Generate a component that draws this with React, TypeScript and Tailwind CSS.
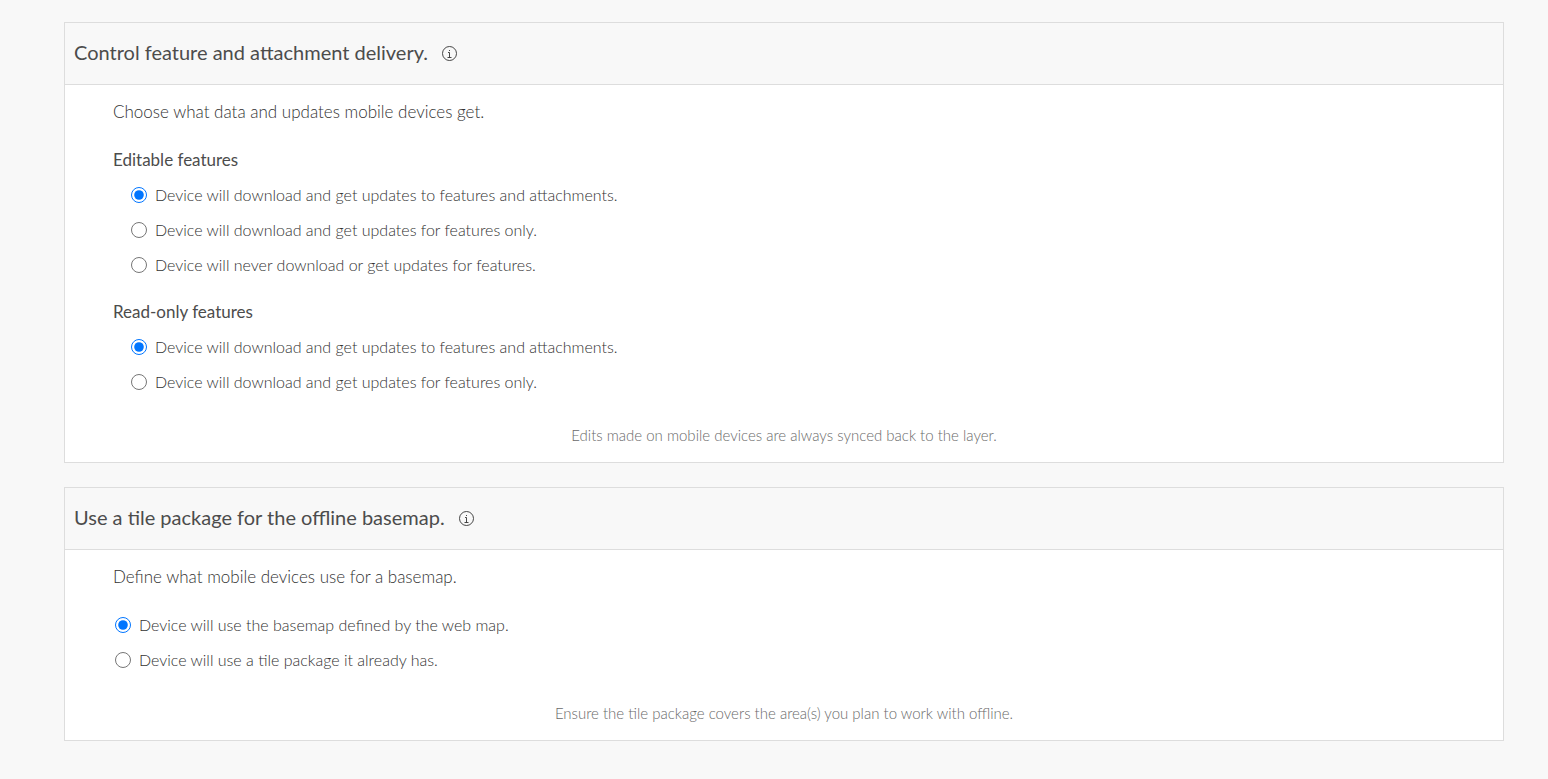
import type { ReactNode } from 'react';
import { clsx } from 'clsx';

interface PanelProps {
  title: string;
  intro: string;
  note: string;
  children: ReactNode;
}

interface RadioGroupProps {
  name: string;
  label: string;
  showLabel?: boolean;
  options: string[];
}

function InfoIcon() {
  return (
    <svg width="16" height="16" viewBox="0 0 16 16" fill="none" stroke="currentColor" aria-hidden="true">
      <circle cx="7.5" cy="7.5" r="7" strokeWidth="0.9" />
      <path d="M7 4.5h1M6 6.5h1.5v5M5.5 11.5h4" strokeWidth="0.9" />
    </svg>
  );
}

function RadioGroup({ name, label, showLabel = true, options }: RadioGroupProps) {
  return (
    <fieldset aria-label={label}>
      {showLabel && <legend className="mb-[11px] text-[17px] leading-6 text-[#4c4c4c]">{label}</legend>}
      <div className={clsx('flex flex-col gap-[11px]', showLabel ? 'pl-[18px]' : 'pl-[2px]')}>
        {options.map((option, index) => (
          <label key={option} className="flex items-center gap-2 text-base leading-6 font-light text-[#323232]">
            <input type="radio" name={name} defaultChecked={index === 0} className="size-4 accent-[#0075ff]" />
            {option}
          </label>
        ))}
      </div>
    </fieldset>
  );
}

function Panel({ title, intro, note, children }: PanelProps) {
  return (
    <section className="border border-[#dddddd] bg-white">
      <header className="flex items-center gap-[14px] border-b border-[#dddddd] bg-[#f8f8f8] px-[9px] py-[17px]">
        <h2 className="pb-[3px] text-xl leading-6 text-[#4c4c4c]">{title}</h2>
        <button type="button" aria-label="More information" className="text-[#323232]">
          <InfoIcon />
        </button>
      </header>
      <div className="px-12 pt-[15px] pb-[17px]">
        <p className="mb-6 text-[17px] leading-6 font-light text-[#323232]">{intro}</p>
        <div className="flex flex-col gap-[23px]">{children}</div>
        <p className="mt-[31px] text-center text-[15px] leading-5 font-light text-[#6a6a6a]">{note}</p>
      </div>
    </section>
  );
}

export default function App() {
  return (
    <main className="flex min-h-screen flex-col gap-6 bg-[#f8f8f8] pt-[22px] pr-11 pb-6 pl-16 font-['Lato',sans-serif]">
      <Panel
        title="Control feature and attachment delivery."
        intro="Choose what data and updates mobile devices get."
        note="Edits made on mobile devices are always synced back to the layer."
      >
        <RadioGroup
          name="editable"
          label="Editable features"
          options={[
            'Device will download and get updates to features and attachments.',
            'Device will download and get updates for features only.',
            'Device will never download or get updates for features.',
          ]}
        />
        <RadioGroup
          name="read-only"
          label="Read-only features"
          options={[
            'Device will download and get updates to features and attachments.',
            'Device will download and get updates for features only.',
          ]}
        />
      </Panel>
      <Panel
        title="Use a tile package for the offline basemap."
        intro="Define what mobile devices use for a basemap."
        note="Ensure the tile package covers the area(s) you plan to work with offline."
      >
        <RadioGroup
          name="basemap"
          label="Offline basemap"
          showLabel={false}
          options={[
            'Device will use the basemap defined by the web map.',
            'Device will use a tile package it already has.',
          ]}
        />
      </Panel>
    </main>
  );
}
